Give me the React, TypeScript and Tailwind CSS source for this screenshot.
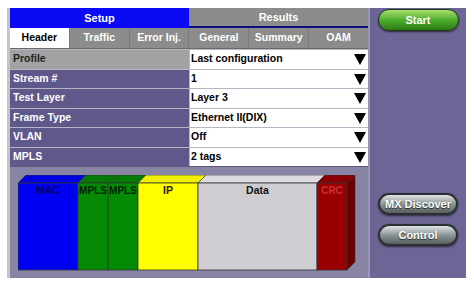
import React from 'react'

const rows = [
  { label: 'Profile', value: 'Last configuration', head: true },
  { label: 'Stream #', value: '1' },
  { label: 'Test Layer', value: 'Layer 3' },
  { label: 'Frame Type', value: 'Ethernet II(DIX)' },
  { label: 'VLAN', value: 'Off' },
  { label: 'MPLS', value: '2 tags' },
]

const tabs = ['Header', 'Traffic', 'Error Inj.', 'General', 'Summary', 'OAM']

function Arrow() {
  return (
    <svg width="12" height="12" viewBox="0 0 12 12" className="shrink-0">
      <polygon points="0,1 12,1 6,12" fill="#000" />
    </svg>
  )
}

// frame structure drawing: front face + 3D top/side
function FrameDiagram() {
  const d = 8
  const top = 8
  const h = 87
  const segs = [
    { x: 0, w: 60, front: '#0000f5', topc: '#0000e0', label: 'MAC', tc: '#000060' },
    { x: 60, w: 30, front: '#058a05', topc: '#047a04', label: 'MPLS', tc: '#002000' },
    { x: 90, w: 30, front: '#058a05', topc: '#047a04', label: 'MPLS', tc: '#002000' },
    { x: 120, w: 60, front: '#ffff00', topc: '#f0f000', label: 'IP', tc: '#202000' },
    { x: 180, w: 119, front: '#cfcdd2', topc: '#dddbe0', label: 'Data', tc: '#111' },
    { x: 299, w: 30, front: '#9a0000', topc: '#8a0000', label: 'CRC', tc: '#d03030' },
  ]
  return (
    <svg width="340" height="97" viewBox="0 0 340 97">
      {segs.map((s, i) => (
        <g key={i}>
          <polygon
            points={`${s.x},${top} ${s.x + d},${top - d} ${s.x + s.w + d},${top - d} ${s.x + s.w},${top}`}
            fill={s.topc}
            stroke="#333"
            strokeWidth="0.6"
          />
          <rect x={s.x} y={top} width={s.w} height={h} fill={s.front} stroke="#333" strokeWidth="0.8" />
          <text
            x={s.x + s.w / 2}
            y={top + 11}
            textAnchor="middle"
            fontFamily="'Liberation Sans', Arial, sans-serif"
            fontWeight="bold"
            fontSize={s.w === 30 ? 10 : 10.5}
            fill={s.tc}
          >
            {s.label}
          </text>
        </g>
      ))}
      <polygon
        points={`329,${top} ${329 + d},${top - d} ${329 + d},${top + h - d} 329,${top + h}`}
        fill="#6e0000"
        stroke="#333"
        strokeWidth="0.6"
      />
    </svg>
  )
}

function PillButton({ label, green }: { label: string; green?: boolean }) {
  return (
    <button
      className={
        green
          ? 'h-[22px] w-[81px] rounded-full border border-[#1f3a10] bg-gradient-to-b from-[#a8e070] via-[#4cad2a] to-[#2f7a18] text-white text-[11px] font-bold shadow-[0_1px_2px_rgba(0,0,0,0.6)]'
          : 'h-[22px] w-[80px] rounded-full border-2 border-[#2c3034] bg-gradient-to-b from-[#dfe6e6] via-[#8c9696] to-[#566060] text-white text-[11px] font-bold [text-shadow:0_1px_1px_#222] shadow-[0_1px_2px_rgba(0,0,0,0.6)]'
      }
    >
      {label}
    </button>
  )
}

export default function App() {
  return (
    <div className="w-[474px] h-[286px] bg-white pl-[7px] pt-[8px] font-['Liberation_Sans',Arial,sans-serif]">
      <div className="flex w-[459px] h-[270px]">
        <div className="w-[361px] flex flex-col border-l-[3px] border-[#c4c4cc] bg-[#8884a4]">
          <div className="grid grid-cols-2 h-[20px] text-white text-[11px] font-bold">
            <div className="bg-[#0a0af5] flex items-center justify-center">Setup</div>
            <div className="bg-[#8c8c8c] flex items-center justify-center border-b-2 border-[#0c0c80]">Results</div>
          </div>
          <div className="grid grid-cols-6 h-[21px] text-[10.5px] font-bold bg-[#7a7a7a] gap-px border-b border-[#6a6a6a]">
            {tabs.map((t, i) => (
              <div
                key={t}
                className={
                  i === 0
                    ? 'bg-white text-black flex items-center justify-center'
                    : 'bg-[#8c8c8c] text-white flex items-center justify-center'
                }
              >
                {t}
              </div>
            ))}
          </div>
          <div className="flex flex-col gap-px bg-[#b8b6c4] pt-px">
            {rows.map((r) => (
              <div key={r.label} className="flex h-[18.5px] gap-px text-[10.5px] font-bold">
                <div
                  className={
                    r.head
                      ? 'w-[179px] bg-[#a2a2a2] text-[#222] flex items-center pl-[3px]'
                      : 'w-[179px] bg-[#5f588a] text-white flex items-center pl-[3px]'
                  }
                >
                  {r.label}
                </div>
                <div className="flex-1 bg-white text-black flex items-center justify-between pl-[1px] pr-[2px]">
                  <span>{r.value}</span>
                  <Arrow />
                </div>
              </div>
            ))}
          </div>
          <div className="flex-1 border-t border-[#5c5880] bg-[#8884a4] pl-[8px] pt-[8px]">
            <FrameDiagram />
          </div>
        </div>
        <div className="flex-1 bg-[#6d6596] border-l-2 border-[#9a94b8] flex flex-col items-center pt-px">
          <PillButton label="Start" green />
          <div className="mt-[162px] flex flex-col gap-[9px]">
            <PillButton label="MX Discover" />
            <PillButton label="Control" />
          </div>
        </div>
      </div>
    </div>
  )
}
